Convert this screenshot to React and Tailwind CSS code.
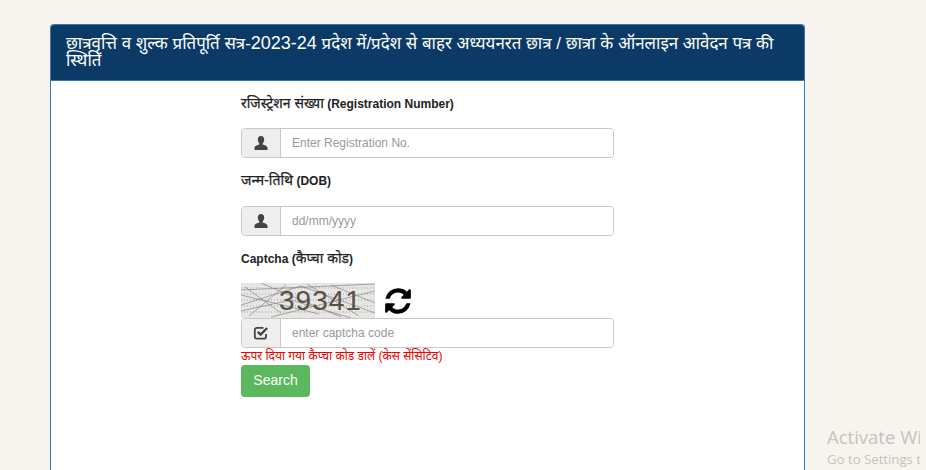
import React from "react";

const User = () => (
  <svg viewBox="0 0 16 16" className="w-[16px] h-[16px]" fill="#444">
    <path d="M8 1c2 0 3.200 1.400 3.200 3.400 0 1.500-.6 2.900-1.400 3.800-.3.400-.3 1 .1 1.300.9.500 4.600 1.300 4.600 3.500V15H1.500v-2c0-2.200 3.700-3 4.600-3.500.4-.3.400-.9.100-1.300C5.400 7.300 4.800 5.900 4.800 4.400 4.800 2.400 6 1 8 1z" />
  </svg>
);

const Check = () => (
  <svg viewBox="0 0 16 16" className="w-[16px] h-[16px]" fill="none" stroke="#444">
    <path d="M13 9v2.500a2.200 2.200 0 0 1-2.200 2.200H4a2.200 2.200 0 0 1-2.200-2.200V5A2.200 2.200 0 0 1 4 2.800h6.500" strokeWidth="1.800" />
    <path d="M4.800 6.800 7.600 9.600 14.200 3" strokeWidth="2.400" />
  </svg>
);

const Refresh = () => (
  <svg viewBox="0 0 1792 1792" className="w-[30px] h-[30px]" fill="#000">
    <path d="M1639 1056q0 5-1 7-64 268-268 434.500t-478 166.500q-146 0-282.500-55t-243.500-157l-129 129q-19 19-45 19t-45-19-19-45v-448q0-26 19-45t45-19h448q26 0 45 19t19 45-19 45l-137 137q71 66 161 102t187 36q134 0 250-65t186-179q11-17 53-117 8-23 30-23h192q13 0 22.500 9.500t9.500 22.500zm25-800v448q0 26-19 45t-45 19h-448q-26 0-45-19t-19-45 19-45l138-138q-148-137-349-137-134 0-250 65t-186 179q-11 17-53 117-8 23-30 23h-199q-13 0-22.500-9.500t-9.500-22.500v-7q65-268 270-434.500t480-166.500q146 0 284 55.500t245 156.500l130-129q19-19 45-19t45 19 19 45z" />
  </svg>
);

const Field = ({ icon, placeholder }) => (
  <div className="flex h-[30px] w-[373px] rounded-[4px] border border-[#ccc6c6] overflow-hidden">
    <div className="w-[39px] shrink-0 bg-[#eeeeee] border-r border-[#ccc6c6] flex items-center justify-center">{icon}</div>
    <input placeholder={placeholder} className="flex-1 min-w-0 bg-white px-[11px] text-[12px] outline-none placeholder:text-[#999]" />
  </div>
);

const Label = ({ hi, before, after }) => (
  <label className="block h-[17px] text-[12px] leading-[17px] font-bold text-[#222]">
    {before}
    <span className="text-[14px] leading-none font-normal [-webkit-text-stroke:0.25px_#222]">{hi}</span>
    {after}
  </label>
);

const Captcha = () => (
  <svg viewBox="0 0 134 35" className="w-[134px] h-[35px] block bg-[#e6e6e4]">
    <g stroke="#c4c4c4" strokeWidth="2" strokeDasharray="1 2" fill="none">
      <path d="M0 5H134M0 11H134M0 17H134M0 23H134M0 29H134" />
    </g>
    <g stroke="#858585" strokeWidth="0.7" fill="none">
      <path d="M0 7 134 1M0 22 60 3 134 30M8 33 45 2M0 12 78 31M20 0 100 34M30 34 134 8M66 1 118 33M0 28 50 17 110 35M90 2 134 20M4 4 40 30" />
    </g>
    <text x="38" y="27" fontSize="28" fill="#5a5044" letterSpacing="1" fontFamily="Liberation Sans, sans-serif">39341</text>
  </svg>
);

export default function App() {
  return (
    <div className="relative w-[926px] h-[470px] overflow-hidden bg-[#f7f4ee] font-['Liberation_Sans','Noto_Sans',sans-serif] pt-[24px] pl-[50px]">
      <div className="w-[755px] h-[460px] rounded-t-[4px] border border-[#337ab7] border-b-0 bg-white">
        <div className="h-[56px] bg-[#0a3a65] border-b border-[#337ab7] rounded-t-[3px] pl-[15px] pr-[15px] pt-[9px] text-white text-[16.900px] leading-[18px]">
          <div className="h-[18px]">छात्रवृत्ति व शुल्क प्रतिपूर्ति सत्र-<span className="text-[18px]">2023-24</span> प्रदेश में/प्रदेश से बाहर अध्ययनरत छात्र / छात्रा के ऑनलाइन आवेदन पत्र की</div>
          <div className="h-[18px]">स्थिति</div>
        </div>
        <div className="pl-[190px] pt-[15px]">
          <Label hi="रजिस्ट्रेशन संख्या" after=" (Registration Number)" />
          <div className="mt-[15px]"><Field icon={<User />} placeholder="Enter Registration No." /></div>
          <div className="mt-[15px]"><Label hi="जन्म-तिथि" after=" (DOB)" /></div>
          <div className="mt-[16px]"><Field icon={<User />} placeholder="dd/mm/yyyy" /></div>
          <div className="mt-[15px]"><Label before="Captcha (" hi="कैप्चा कोड" after=")" /></div>
          <div className="mt-[15px] flex items-center h-[35px]">
            <Captcha />
            <div className="ml-[8px] w-[30px] h-[30px] bg-white"><Refresh /></div>
          </div>
          <Field icon={<Check />} placeholder="enter captcha code" />
          <div className="h-[15px] text-[12px] leading-[15px] text-[#f00000] mt-[1px]">ऊपर दिया गया कैप्चा कोड डालें (केस सेंसिटिव)</div>
          <button className="mt-[1px] block h-[32px] w-[69px] pb-[2px] rounded-[4px] bg-[#5cb85c] text-white text-[14px]">Search</button>
        </div>
      </div>
      <div className="absolute left-[827px] top-[425px] w-[93px] overflow-hidden whitespace-nowrap font-['Open_Sans',sans-serif] text-[#c4c3c0]">
        <div className="text-[18.500px] leading-[24px]">Activate Windows</div>
        <div className="text-[13.200px] leading-[20px]">Go to Settings to activate Windows.</div>
      </div>
    </div>
  );
}
